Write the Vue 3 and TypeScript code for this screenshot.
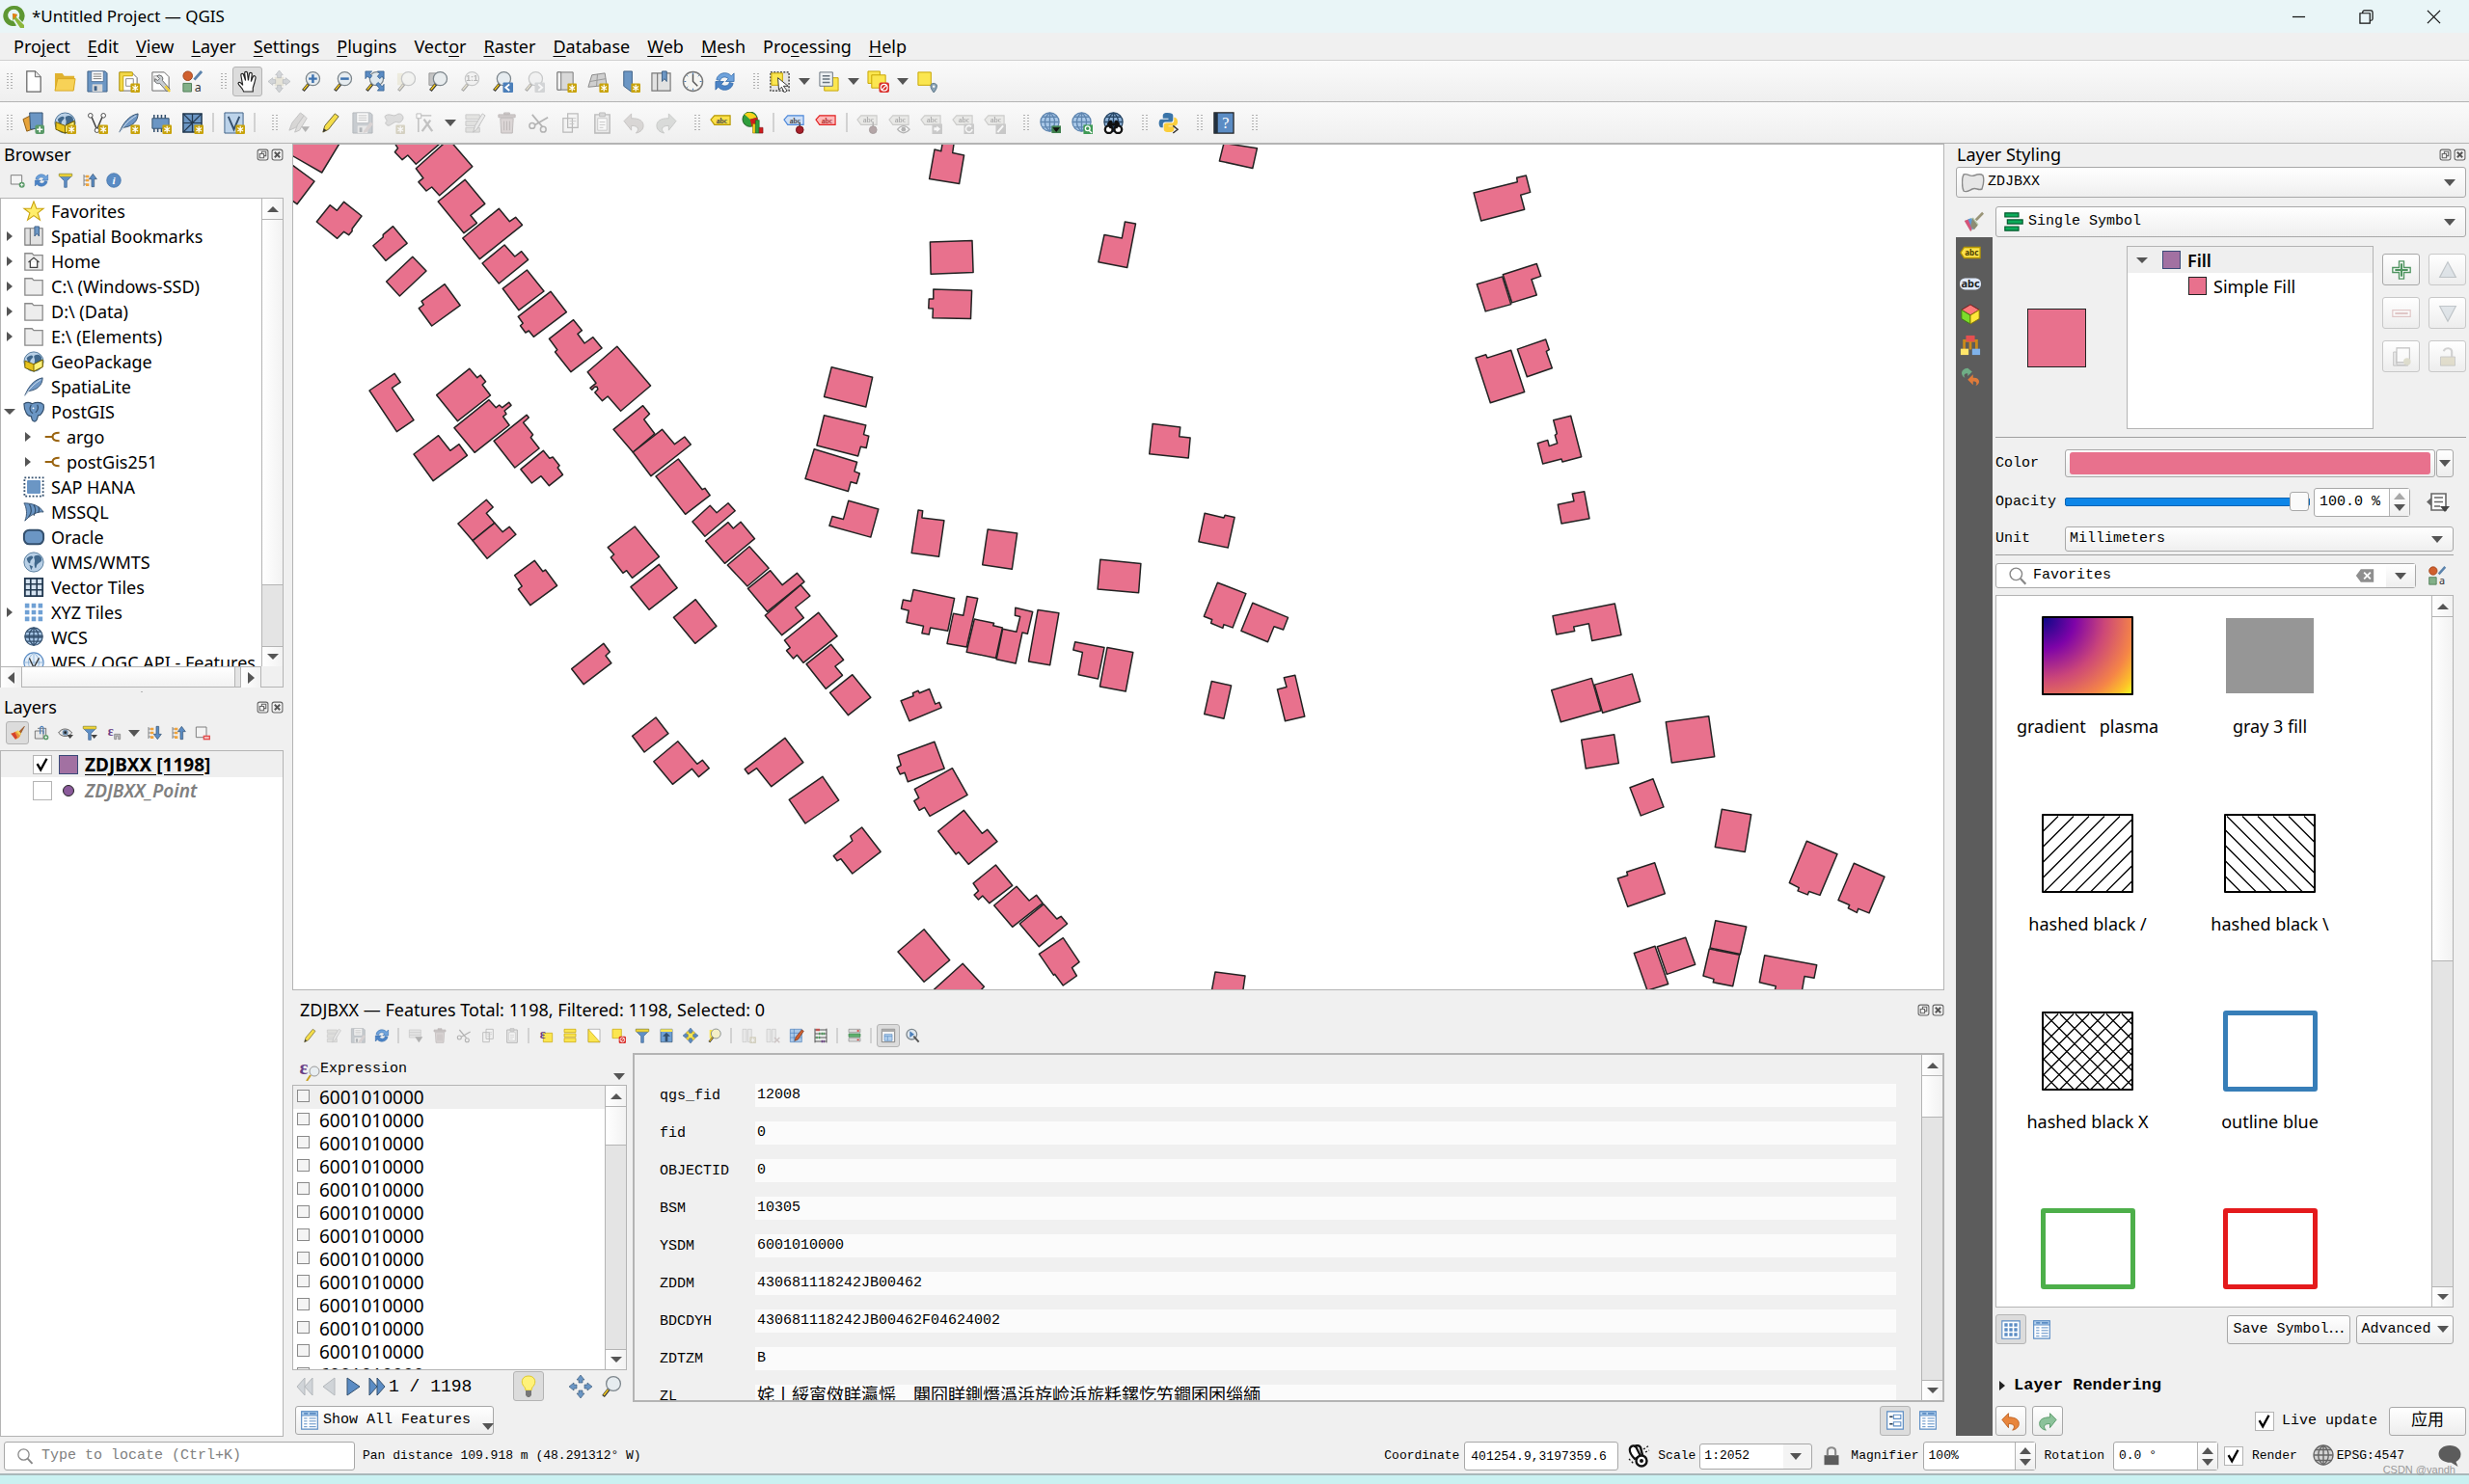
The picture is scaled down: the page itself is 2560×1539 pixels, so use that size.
<script setup lang="ts">
import { h } from 'vue'

/* ---------- icon drawings, all on a 24 x 24 grid ---------- */
const star =
  '<rect x="14" y="14" width="10" height="10" rx="1" fill="#c8a30b"/><path d="M19 15.4v7.2M16 17.2l6 3.6M22 17.2l-6 3.6" stroke="#fff" stroke-width="1.3"/>'
const plusBadge =
  '<rect x="14" y="14" width="10" height="10" rx="2" fill="#5a9a68"/><path d="M19 15.8v6.4M15.8 19h6.4" stroke="#fff" stroke-width="1.6"/>'
const lens = (fill = '#e6ecf0') =>
  `<path d="M9.5 14.5 3.5 22" stroke="#333" stroke-width="3.4"/><path d="M8.5 15.3 4 21" stroke="#f2c81e" stroke-width="1.6"/><circle cx="14" cy="9" r="7.4" fill="${fill}" stroke="#7d868c" stroke-width="1.3"/>`
const globe = (a: string, b: string) =>
  `<circle cx="12" cy="11" r="10" fill="${a}" stroke="${b}" stroke-width="1.3"/><path d="M2 11h20M12 1v20M4 5.5h16M4 16.5h16M12 1C5 6 5 16 12 21M12 1c7 5 7 15 0 20" fill="none" stroke="${b}" stroke-width="1.4"/>`
const tag = (fill: string, line: string, ink = '#4a4a4a') =>
  `<path d="M1 8.5 5 4h17v10H5Z" fill="${fill}" stroke="${line}" stroke-width="1.2"/><text x="13" y="12" text-anchor="middle" font-size="8" font-weight="700" fill="${ink}" font-family="Liberation Serif, serif">abc</text>`
const world =
  '<circle cx="12" cy="12" r="11" fill="#b9d0e6" stroke="#4c7396"/><path d="M4 8c3-3 6-4 7-2s-3 3-3 6-3 1-4-4ZM13 5c4-2 8 0 8 4s-5 3-6 8-3-2-2-5-2-5 0-7ZM7 15l4 2-2 4Z" fill="#41688c"/>'
const box = '<path d="M2 11 12 15 22 10v8l-10 5-10-4Z" fill="#e8c31c" stroke="#6d5a00"/><path d="M12 15v8l10-5v-8Z" fill="#fff27a" stroke="#6d5a00"/>'
const feather = '<path d="M2 22C6 12 12 4 22 2c0 8-6 14-16 15Z" fill="#6f97c4" stroke="#34506e"/><path d="M2 23C7 14 12 9 20 4" fill="none" stroke="#dbe7f3"/>'
const refresh =
  '<path d="M3 10C4 3 14 0 19 6l3-3v9h-9l3-3C12 6 8 7 7 11Z" fill="#6fa3dc" stroke="#2f67a8" stroke-width=".8"/><path d="M21 14c-1 7-11 10-16 4l-3 3v-9h9l-3 3c4 3 8 2 9-2Z" fill="#4b83c6" stroke="#2f67a8" stroke-width=".8"/>'
const pencil = '<path d="M4 22 6 15 17 2l4 3L10 19Z" fill="#f4dd4a" stroke="#6b6230"/><path d="M4 22l1-4 3 2Z" fill="#333"/>'
const funnel = '<path d="M2 2h20v3l-8 8v10h-4V13L2 5Z" fill="#5f8fc6" stroke="#3c6491"/><path d="M2 2h20v4H2Z" fill="#efd63c" stroke="#b59c14" stroke-width=".8"/>'
const layersTree = '<path d="M3 3v18M3 6h4M3 12h4M3 18h4" stroke="#777" fill="none" stroke-width="1.3"/><path d="M6 4h5v4H6ZM6 10h5v4H6ZM6 17h5v4H6Z" fill="#f0a33a"/>'
const undoArrow = (f: string, s: string) => `<path d="M1 10 9 2v5c9 0 13 3 13 8 0 4-3 7-8 8 3-3 4-8-5-8v5Z" fill="${f}" stroke="${s}"/>`
const redoArrow = (f: string, s: string) => `<path d="M23 10 15 2v5C6 7 2 10 2 15c0 4 3 7 8 8-3-3-4-8 5-8v5Z" fill="${f}" stroke="${s}"/>`
const fourWay = (c: string) =>
  `<path d="m12 0 4 5h-2v3h-4V5H8ZM12 24l4-5h-2v-3h-4v3H8ZM0 12l5-4v2h3v4H5v2ZM24 12l-5-4v2h-3v4h3v2Z" fill="${c}" stroke="#34506e" stroke-width=".6"/>`
const trash = '<path d="M5 7h14l-1 16H6Z" fill="#d8a0a0" stroke="#8c5a5a"/><path d="M3 3h18v3H3ZM9 1h6v2H9ZM9 10v10M12 10v10M15 10v10" fill="#b98080" stroke="#8c5a5a"/>'
const scissors = '<path d="M5 3l11 13M22 6 8 14" stroke="#555" stroke-width="1.8"/><circle cx="17" cy="19" r="3" fill="none" stroke="#555" stroke-width="1.6"/><circle cx="5" cy="15" r="3" fill="none" stroke="#555" stroke-width="1.6"/>'
const copy = '<path d="M4 7h10v15H4ZM9 2h11v15H9Z" fill="#f4f4f4" stroke="#666" stroke-width="1.3"/><path d="M11 7h7M11 10h7M11 13h5" stroke="#888"/>'
const paste = '<path d="M4 3h16v20H4Z" fill="#ddd" stroke="#666" stroke-width="1.5"/><path d="M7 7h10v13H7Z" fill="#fff" stroke="#888"/><path d="M9 1h6v4H9Z" fill="#aaa" stroke="#666"/><path d="M9 11h6M9 14h6M9 17h4" stroke="#888"/>'
const save =
  '<path d="M2 1h19l2 2v20H2Z" fill="#6b96c4" stroke="#3d5f85"/><path d="M6 1h13v11H6Z" fill="#fff" stroke="#3d5f85" stroke-width=".7"/><path d="M8 4h9M8 6.5h9M8 9h9" stroke="#777"/><path d="M7 15h11v8H7Z" fill="#d8d8d8"/><path d="M9 17h3v5H9Z" fill="#3d5f85"/>'
const tableIco =
  '<path d="M2 1h20v22H2Z" fill="#fff" stroke="#5b8cc4" stroke-width="1.4"/><path d="M2 1h20v5H2Z" fill="#b5d2ee" stroke="#5b8cc4" stroke-width="1.2"/><path d="M5 3.5h5M12 3.5h8" stroke="#5b8cc4" stroke-width="2.2"/><path d="M5 9.5h4M11.5 9.5H20M5 13h4M11.5 13H20M5 16.5h4M11.5 16.5H20M5 20h4M11.5 20H20" stroke="#5b8cc4" stroke-width="1.2"/>'
const nodes = '<path d="M6 5 12 19 18 5" fill="none" stroke="#444" stroke-width="1.6"/><circle cx="5" cy="4" r="2.4" fill="#fff" stroke="#444"/><circle cx="12" cy="20" r="2.4" fill="#fff" stroke="#444"/><circle cx="19" cy="4" r="2.4" fill="#fff" stroke="#444"/>'
const noEntry = '<rect x="13" y="13" width="11" height="11" rx="2" fill="#d9302c"/><circle cx="18.5" cy="18.5" r="3.5" fill="none" stroke="#fff" stroke-width="1.3"/><path d="m16 21 5-5" stroke="#fff" stroke-width="1.3"/>'
const eps = '<text x="7" y="17" text-anchor="middle" font-size="21" font-weight="700" fill="#6a3f86" font-family="Liberation Serif, serif">ε</text>'
const hand =
  '<path d="M8 23c-1-4-5-6-6-9 1-2 3-1 5 2L5 5c0-2 3-2 3 0l2 6-1-8c0-2 3-2 3 0l1 8 1-7c0-2 3-2 3 0l-1 8 2-5c1-2 3-1 3 1-1 5-2 8-3 11v4Z" fill="#fff" stroke="#222" stroke-width="1.2"/>'
const drop = '<path d="M18 11v5" stroke="#555" stroke-width="1.5"/><circle cx="18" cy="19.5" r="4" fill="#a8202a" stroke="#701018"/>'
const styleMgr =
  '<circle cx="7" cy="6" r="5" fill="#d0602e" stroke="#a0451c"/><path d="M22 1 14 10" stroke="#5b83ac" stroke-width="3"/><path d="M2 14h9v9H2Z" fill="#82b088" stroke="#4d7c55"/><text x="18" y="23" text-anchor="middle" font-size="13" fill="#333" font-family="Noto Sans, sans-serif">a</text>'
const bin = '<circle cx="7" cy="19" r="4" fill="#fff" stroke="#111" stroke-width="2.5"/><circle cx="17" cy="19" r="4" fill="#fff" stroke="#111" stroke-width="2.5"/><path d="M5 13 8 9h2l1 3h2l1-3h2l3 4-3 5h-3v-3h-2v3H8Z" fill="#111"/>'

const icons: Record<string, string> = {
  logo: '<path d="M12 1a10.5 10.5 0 1 0 3 20.500l-3-4.800a6 6 0 1 1 5.400-3l3.800 4.300A10.500 10.500 0 0 0 12 1Z" fill="#5d9732"/><path d="m11 9 5 1-1 3 8 8v3h-4l-6-9-2 1Z" fill="#8cb63c"/><path d="m11 9 5 1-4 5Z" fill="#ee7913"/>',
  page: '<path d="M5 1h9l6 6v16H5Z" fill="#fff" stroke="#666" stroke-width="1.3"/><path d="M14 1v6h6" fill="#e6e6e6" stroke="#666"/>',
  open: '<path d="M1 3h8l2 3h11v15H1Z" fill="#e0b230"/><path d="M4 9h19l-2 13H1Z" fill="#f7d257" stroke="#d8a821"/>',
  save,
  layout: `<path d="M2 2h13l6 6v14H2Z" fill="#fff" stroke="#666"/><path d="M2 2h14v4H6v16H2Z" fill="#f3d94a" stroke="#c7a400"/><path d="M9 9h8v8H9Z" fill="none" stroke="#888"/>${star}`,
  layoutMgr: '<path d="M3 2h13l5 5v15H3Z" fill="#fff" stroke="#666"/><path d="M5 6h8v6H5Z" fill="#eee" stroke="#aaa"/><path d="M8 6a4 4 0 0 1 6 5l8 9-3 3-8-9c-3 1-6-1-5-5l3 2 2-2Z" fill="#c9ced2" stroke="#666"/><path d="m17 17 5 6" stroke="#f0cf3a" stroke-width="2.5"/>',
  styleMgr,
  hand,
  panSel: `<path d="M7 7h10v10H7Z" fill="#e6d05a"/>${fourWay('#8ea9c6')}`,
  zoomIn: `${lens()}<path d="M14 4.5v9M9.5 9h9" stroke="#3f73b0" stroke-width="2.6"/>`,
  zoomOut: `${lens()}<path d="M9.5 9h9" stroke="#3f73b0" stroke-width="2.6"/>`,
  zoomFull: `${lens('#dfe8ee')}<path d="M2 1h7L6.500 3.500 9 6 7 8.500 4 6.500 2 9ZM22 1v8l-2-2.500L17.500 9 15 6.500l2.500-3L15 1ZM22 22h-7l2-2.500L13.500 15l2.500-2 4 4.500 2-2.500Z" fill="#5b8cc4" stroke="#2f5b8c" stroke-width=".8"/>`,
  zoomSel: `<path d="M2 3h11v13H2Z" fill="#f6df5b"/>${lens('#eef0dc')}`,
  zoomLayer: `<path d="M2 3h11v13H2Z" fill="#c4c4c4" stroke="#999"/>${lens('#e8ecee')}`,
  zoomNative: `${lens('#eee')}<text x="14" y="12" text-anchor="middle" font-size="9" font-weight="700" fill="#555" font-family="Liberation Sans, sans-serif">1:1</text>`,
  zoomLast: `${lens()}<rect x="13" y="13" width="11" height="11" rx="1" fill="#4b7fba"/><path d="m20 15-4 3.500 4 3.500" fill="none" stroke="#fff" stroke-width="2"/>`,
  zoomNext: `${lens()}<rect x="13" y="13" width="11" height="11" rx="1" fill="#9ab"/><path d="m17 15 4 3.500-4 3.500" fill="none" stroke="#fff" stroke-width="2"/>`,
  newMap: `<path d="M3 2h17v19H3Z" fill="#d9d9d9" stroke="#777"/><path d="M3 2h4v19H3Z" fill="#f4f4f4" stroke="#777"/>${star}`,
  new3d: `<path d="M6 5 20 3l2 13-20 2Z" fill="#cfcfcf" stroke="#888"/><path d="m4 12 17-3M12 4l-1 13" stroke="#999"/>${star}`,
  newMark: `<path d="M6 1h9v14l2 4-3 4-8-6Z" fill="#6b96c4" stroke="#3d5f85"/>${star}`,
  marks: '<path d="M2 3h6v19H2ZM8 3h14v19H4" fill="#e2e2e2" stroke="#777" stroke-width="1.2"/><path d="M13 1h5v11l-2.500-3-2.500 3Z" fill="#6b96c4" stroke="#3d5f85"/>',
  clock: '<circle cx="12" cy="12" r="10.5" fill="#f5f5f2" stroke="#777" stroke-width="1.5"/><path d="M12 4v8l5 5" fill="none" stroke="#555" stroke-width="1.5"/><path d="M12 2.500v2M12 19.500v2M2.500 12h2M19.500 12h2M5.500 5.500l1 1M18.500 5.500l-1 1M5.500 18.500l1-1" stroke="#3f73b0"/>',
  refresh,
  select: '<path d="M2 2h20v20H2Z" fill="#e6e6e6" stroke="#222" stroke-width="1.3" stroke-dasharray="2 1.5"/><path d="M3 3h12v13H3Z" fill="#fbe650" stroke="#c7a400"/><path d="m10 8 1 13 3-3 3 6 3-2-4-5h5Z" fill="#fff" stroke="#333"/>',
  selForm: '<path d="M7 8h15v14H7Z" fill="#fbe650" stroke="#c7a400"/><path d="M2 2h14v15H2Z" fill="#eef1f3" stroke="#66727c"/><path d="M5 6h8M5 9.500h8M5 13h8" stroke="#66727c" stroke-width="1.6"/>',
  deselect: `<path d="M1 1h13v13H1Z" fill="#fbe650" stroke="#c7a400"/><path d="M5 5h15v14H5Z" fill="#fbe650" stroke="#c7a400"/>${noEntry}`,
  selLoc: '<path d="M2 2h14v14H2Z" fill="#fbe650" stroke="#c7a400"/><path d="M19 24c-5-6-4-10 0-10s5 4 0 10Z" fill="#8aa2b4" stroke="#5c7688"/><circle cx="19" cy="17.5" r="1.2" fill="#fff"/>',
  dataSrc: `<path d="m1 8 10-5 5 14-11 4Z" fill="#e7a33a" stroke="#8a5a12"/><path d="M8 1h14v16l-13 2Z" fill="#6b96c4" stroke="#34506e"/>${plusBadge}`,
  newGpkg: `${world}${box}${star}`,
  newShp: `${nodes}${star}`,
  newLite: `${feather}${star}`,
  newMem: `<path d="M3 7h18v11H3Z" fill="#6b96c4" stroke="#34506e"/><path d="M5 3v4M9 3v4M13 3v4M17 3v4M5 18v4M9 18v4M13 18v4" stroke="#34506e" stroke-width="1.6"/>${star}`,
  newMesh: `<path d="M2 2h20v20H2Z" fill="#6b96c4" stroke="#22384f" stroke-width="1.5"/><path d="M2 12h20M12 2v20M2 2l10 10L22 2M2 22l10-10" stroke="#22384f" stroke-width="1.3" fill="none"/>${star}`,
  newVirt: `<path d="M2 1h20v22H2Z" fill="#bcd3ea" stroke="#3d5f85"/><path d="M6 5 12 19 18 5" fill="none" stroke="#34506e" stroke-width="2"/>${star}`,
  edits: '<path d="M2 20 5 12 14 1l4 3-9 13Z" fill="#b5aaa2" stroke="#777"/><path d="M8 22 11 14 18 4l3 3-8 13Z" fill="#c9bdb4" stroke="#777"/><path d="M15 16h9l-4.500 6Z" fill="#555"/>',
  pencil,
  saveEdits: `${save}<path d="m14 20 7-9 3 2-7 9-4 1Z" fill="#d79a9a"/>`,
  addPoly: `<path d="M3 4c5-3 8 2 12-1s9 2 6 6-4 2-7 2-7 6-10 3 1-3 0-5-3-4-1-5Z" fill="#b9b9b9" stroke="#777"/>${star}`,
  vertex: '<path d="M4 22V4h14" fill="none" stroke="#666" stroke-width="1.4"/><path d="M2 2h5v5H2Z" fill="#fff" stroke="#666"/><path d="m8 21 9-12M10 8l9 13" stroke="#777" stroke-width="2.4"/>',
  modify: '<path d="M2 3h15v5H2ZM2 10h15v5H2ZM2 17h15v5H2Z" fill="#c9c7b8" stroke="#888"/><path d="M10 22 12 15 20 2l3 2-9 15Z" fill="#ddd" stroke="#777"/>',
  trash,
  scissors,
  copy,
  paste,
  undoDim: undoArrow('#c0a89c', '#8f7b70'),
  redoDim: redoArrow('#a9b8a9', '#7c8a7c'),
  label: tag('#fbe14a', '#b59600'),
  diagram: '<circle cx="9" cy="8" r="8" fill="#2f9e3c" stroke="#1c5c22"/><path d="M9 8 3 2.500C8-1.500 15 2 16 6Z" fill="#f7d21b"/><path d="M9 8 17 6c1 4-2 9-6 10Z" fill="#d01c1c"/><path d="M12 13h3v10h-3Z" fill="#f7d21b" stroke="#8a7200" stroke-width=".6"/><path d="M15 9h4v14h-4Z" fill="#2f9e3c" stroke="#1c5c22" stroke-width=".6"/><path d="M19 17h4v6h-4Z" fill="#d01c1c" stroke="#701018" stroke-width=".6"/>',
  labelPin: `${tag('#cfe0f7', '#4b86d8')}${drop}`,
  labelRed: tag('#ffb9b9', '#e02020', '#b03030'),
  lblA: `${tag('#d9d9c4', '#8f8f80')}${drop}`,
  lblB: `${tag('#d9d9c4', '#8f8f80')}<path d="M10 19c4-5 9-5 13 0-4 5-9 5-13 0Z" fill="#fff" stroke="#555" stroke-width="1.3"/><circle cx="16.5" cy="19" r="2.5" fill="#555"/>`,
  lblC: `${tag('#d9d9c4', '#8f8f80')}<path d="M13 13h11v11H13Z" fill="#8c8c8c"/><path d="M15 17h3v-2l4 3.500-4 3.500v-2h-3Z" fill="#fff"/>`,
  lblD: `${tag('#d9d9c4', '#8f8f80')}<path d="M13 13h11v11H13Z" fill="#8c8c8c"/><path d="M21 16a3.500 3.500 0 1 0 1 3" fill="none" stroke="#fff" stroke-width="1.6"/>`,
  lblE: `${tag('#d9d9c4', '#8f8f80')}<path d="M13 13h11v11H13Z" fill="#8c8c8c"/><path d="m15 22 6-7" stroke="#fff" stroke-width="2"/>`,
  metaGet: `${globe('#a9c8e8', '#5f86b0')}<path d="M14 15h10v8H14Z" fill="#3f7f4c"/><path d="M15 17h8l-4 5Z" fill="#111"/>`,
  metaFind: `${globe('#a9c8e8', '#5f86b0')}<path d="M14 14h10v10H14Z" fill="#3f9a55"/><circle cx="18.5" cy="18" r="2.5" fill="none" stroke="#fff" stroke-width="1.4"/><path d="m20 20 3 3" stroke="#fff" stroke-width="1.4"/>`,
  metaBin: `${globe('#8fb3d9', '#274766')}${bin}`,
  python: '<path d="M11 1c-5 0-5 2-5 4v2h6v1H4c-3 0-3 8 0 9h2v-3c0-2 1-3 3-3h5c2 0 3-1 3-3V4c0-2-2-3-6-3Z" fill="#3a74a8"/><path d="M13 22c5 0 5-2 5-4v-2h-6v-1h7c4 0 4-8 0-9h-1v3c0 2-1 3-3 3h-5c-2 0-3 1-3 3v4c0 2 2 3 6 3Z" fill="#fbce3b"/><path d="m17 15 5 4-5 4" fill="none" stroke="#333" stroke-width="1.5"/>',
  help: '<path d="M2 1h21v22H2Z" fill="#5b8cc4" stroke="#222" stroke-width="1.3"/><path d="M2 1h4v22H2Z" fill="#22303e"/><text x="14.5" y="18" text-anchor="middle" font-size="17" fill="#fff" font-family="Liberation Serif, serif">?</text>',
  /* browser and layer panels */
  addLayer: '<path d="M2 4h17v14H2Z" fill="#f4f4f4" stroke="#777" stroke-width="1.4"/><circle cx="19" cy="19" r="4.5" fill="#5a9a68"/><path d="M19 16.500v5M16.500 19h5" stroke="#fff" stroke-width="1.4"/>',
  remLayer: '<path d="M2 3h16v16H2Z" fill="#f4f4f4" stroke="#777" stroke-width="1.4"/><path d="M13 16h11v7H13Z" fill="#e45050"/><path d="M15 19.500h7" stroke="#fff" stroke-width="1.8"/>',
  funnel,
  collapse: `${layersTree}<path d="m17 2 6 8h-4v12h-4V10h-4Z" fill="#5b8cc4" stroke="#34506e"/>`,
  expand: `${layersTree}<path d="m17 22 6-8h-4V2h-4v12h-4Z" fill="#5b8cc4" stroke="#34506e"/>`,
  info: '<circle cx="12" cy="12" r="11" fill="#5b8cc4" stroke="#3d6ea6"/><text x="12" y="18" text-anchor="middle" font-size="17" font-style="italic" font-weight="700" fill="#fff" font-family="Liberation Serif, serif">i</text>',
  brush: '<path d="M23 2 13 12l3 3Z" fill="#b5652a" stroke="#8a4718"/><path d="M2 13c5 0 6-4 10-3l5 4c0 5-4 7-8 8Z" fill="#e9963a"/><path d="M2 13c3 0 4-1 6-2l4 8-3 3Z" fill="#d6422e"/><path d="M10 10l3-2 5 5-2 3Z" fill="#f4d35a"/>',
  groupAdd: '<path d="M2 9h13v12H2ZM6 5h13v12" fill="#e6e6e6" stroke="#666" stroke-width="1.3"/><path d="M10 14V5c0-4 5-4 5 0v9" fill="none" stroke="#4b7fba" stroke-width="1.8"/><circle cx="19" cy="19" r="4" fill="#5a9a68"/><path d="M19 17v4M17 19h4" stroke="#fff" stroke-width="1.3"/>',
  eye: '<path d="M1 12C6 4 16 4 22 12 16 19 7 19 1 12Z" fill="#e8e8e8" stroke="#555" stroke-width="1.4"/><circle cx="11.5" cy="11.5" r="4.5" fill="#6d8cab"/><circle cx="11.5" cy="11.5" r="2" fill="#222"/><path d="M14 15h10l-5 6Z" fill="#444"/>',
  funnelMenu: `${funnel}<path d="M14 15h10l-5 6Z" fill="#444"/>`,
  epsFilter: `${eps}<path d="M13 14h9v8h-3v-5h-3v5h-3Z" fill="#bbb" stroke="#777"/>`,
  star: '<path d="m12 1 3 8h8l-6.500 5L19 22l-7-5-7 5 2.500-8L1 9h8Z" fill="#ffee6a" stroke="#c9a20c" stroke-width="1.2"/>',
  home: '<path d="M2 3h8l2 2h10v17H2Z" fill="#ededed" stroke="#8a8a8a" stroke-width="1.4"/><path d="m6 13 6-5 6 5M8 12v7h8v-7" fill="#fff" stroke="#444" stroke-width="1.4"/>',
  folder: '<path d="M2 3h8l2 2h10v17H2Z" fill="#ededed" stroke="#8a8a8a" stroke-width="1.4"/>',
  gpkg: `${world}${box}`,
  feather,
  elephant: '<path d="M1 3c5-3 7-1 9 0 5-2 10-2 13 1 1 4-1 9-4 12h-2c-1 3-1 7-4 7-4 0-3-4-4-6-4 1-8-6-8-14Z" fill="#6b96c4" stroke="#34506e" stroke-width="1.3"/><path d="M9 4c-2 4-1 8 2 10M16 4c2 4 0 7-2 9" fill="none" stroke="#34506e" stroke-width="1.3"/><circle cx="11.5" cy="8" r="1" fill="#fff"/>',
  plug: '<path d="M1 12h11M22 6c-7 0-10 3-10 6s3 6 10 6" fill="none" stroke="#9a6410" stroke-width="3"/>',
  hana: '<path d="M5 5h14v14H5Z" fill="#6b96c4" stroke="#5b8cc4"/><path d="M1.500 1.500h21v21h-21Z" fill="none" stroke="#34506e" stroke-width="2" stroke-dasharray="2 2"/>',
  mssql: '<path d="M1 2c8 0 17 2 22 10-6-1-15 3-21 10C5 15 4 7 1 2Z" fill="#6b96c4" stroke="#34506e"/><path d="M7 3c3 5 3 10-1 15M12 4c3 5 2 8 0 12M17 6c2 3 1 5 0 7" fill="none" stroke="#34506e" stroke-width="1.3"/>',
  oracle: '<rect x="1" y="4" width="22" height="16" rx="6" fill="#6b96c4" stroke="#34506e" stroke-width="2.2"/>',
  wms: world,
  vtiles: '<path d="M2 2h20v20H2Z" fill="#d5e3f1" stroke="#22384f" stroke-width="2"/><path d="M2 8.500h20M2 15h20M8.500 2v20M15.500 2v20" stroke="#22384f" stroke-width="1.8"/>',
  xyz: '<path d="M2 2h5v5H2ZM9.500 2h5v5h-5ZM17 2h5v5h-5ZM2 9.500h5v5H2ZM9.500 9.500h5v5h-5ZM17 9.500h5v5h-5ZM2 17h5v5H2ZM9.500 17h5v5h-5ZM17 17h5v5h-5Z" fill="#6fa0d4"/>',
  wcs: `${globe('#a9c8e8', '#34506e')}<path d="M2 9h20v4H2Z" fill="#34506e" opacity=".7"/>`,
  wfs: '<circle cx="12" cy="12" r="11" fill="#e4eef8" stroke="#5b8cc4" stroke-width="1.3"/><path d="M1 12h22M12 1v22M12 1C4 7 4 17 12 23M12 1c8 6 8 16 0 22" fill="none" stroke="#8fb3d9"/><path d="m7 7 5 11 6-11" fill="none" stroke="#333" stroke-width="1.4"/>',
  /* attribute form */
  addRow: '<path d="M2 3h18v12H2Z" fill="#d6d6d6" stroke="#888"/><path d="M2 7h18M2 11h18" stroke="#888"/><path d="M11 14h12l-6 9Z" fill="#555"/>',
  selExpr: `<path d="M8 8h14v14H8Z" fill="#fbe650" stroke="#c7a400"/>${eps}`,
  selAll: '<path d="M3 2h18v5H3ZM3 9h18v5H3ZM3 16h18v6H3Z" fill="#fbe650" stroke="#c7a400"/>',
  invert: '<path d="M3 2h18v20H3Z" fill="#fff" stroke="#999"/><path d="M3 2v20h18Z" fill="#fbe650" stroke="#c7a400"/>',
  selNone: `<path d="M3 2h14v14H3Z" fill="#fbe650" stroke="#c7a400"/>${noEntry}`,
  moveTop: '<path d="M3 2h18v20H3Z" fill="#6fa0d4" stroke="#34506e"/><path d="M3 2h18v4H3Z" fill="#fbe650"/><path d="m12 7 6 6h-4v8h-4v-8H6Z" fill="#34506e"/>',
  panTo: `<path d="M6 6h12v12H6Z" fill="#fbe650" stroke="#c7a400"/>${fourWay('#5b8cc4')}`,
  zoomTo: `<path d="M4 3h11v13H4Z" fill="#fbe650"/>${lens('#f4efc8')}`,
  colAdd: `<path d="M3 2h6v20H3ZM11 2h6v20h-6Z" fill="#ddd" stroke="#888"/>${star}`,
  colDel: '<path d="M3 2h6v20H3ZM11 2h6v20h-6Z" fill="#ddd" stroke="#888"/><path d="m15 15 8 8M23 15l-8 8" stroke="#c77" stroke-width="2"/>',
  colEdit: '<path d="M2 2h18v20H2Z" fill="#a9c8e8" stroke="#4b7fba"/><path d="M8 2v20M2 8h18M2 15h18" stroke="#4b7fba"/><path d="M9 20 11 14 20 3l3 2-9 13Z" fill="#d0602e" stroke="#702c10"/>',
  abacus: '<path d="M3 1v22M21 1v22M3 3h18M3 9h18M3 15h18M3 21h18" stroke="#555" stroke-width="1.5"/><path d="M6 1v4M9 1v4" stroke="#d0302c" stroke-width="2"/><path d="M10 7v4M14 7v4M17 7v4" stroke="#4a9a58" stroke-width="2"/><path d="M6 13v4M10 13v4" stroke="#4a9a58" stroke-width="2"/><path d="M14 19v4M17 19v4" stroke="#6a3f86" stroke-width="2"/>',
  condFmt: '<path d="M3 2h18v5H3Z" fill="#ddd" stroke="#888"/><path d="M3 9h18v5H3Z" fill="#5fb06e" stroke="#3f7f4c"/><path d="M3 16h18v5H3Z" fill="#ddd" stroke="#888"/><path d="M16 4.500h3M16 18.500h3" stroke="#d0302c" stroke-width="2"/>',
  dock: '<path d="M2 2h20v20H2Z" fill="#f4f4f4" stroke="#777" stroke-width="1.3"/><path d="M2 2h20v4H2Z" fill="#aaa"/><path d="M6 10h12v10H6Z" fill="#b5d2ee" stroke="#5b8cc4"/><path d="M6 13h12M11 13v7" stroke="#5b8cc4"/>',
  actions: '<circle cx="11" cy="10" r="8" fill="#dfe8f0" stroke="#7d868c" stroke-width="2"/><path d="m8 5 7 5-7 5Z" fill="#4b7fba"/><path d="m14 13 8 9" stroke="#555" stroke-width="3"/>',
  exprFind: `${eps}<circle cx="18" cy="14" r="5" fill="#e9eef1" stroke="#999"/><path d="m14 18-4 6" stroke="#c8a020" stroke-width="2"/>`,
  bulb: '<path d="M12 1C6 1 4 6 6 10c1 2 3 3 3 6h6c0-3 2-4 3-6 2-4 0-9-6-9Z" fill="#fff27a" stroke="#e0c92a"/><path d="M9 16h6v5l-2 2h-2l-2-2Z" fill="#777"/>',
  fourWay: fourWay('#6b96c4'),
  lens: lens(),
  table: tableIco,
  formView: '<path d="M2 1h20v22H2Z" fill="#fff" stroke="#5b8cc4" stroke-width="1.4"/><path d="M10 5h9v5h-9ZM10 14h9v5h-9Z" fill="#fff" stroke="#5b8cc4" stroke-width="1.3"/><path d="M5 7.500h4M5 16.500h4" stroke="#22384f" stroke-width="2"/>',
  /* styling dock */
  polygon: '<path d="M2 4c4-2 6 3 11 1s8-1 9 0c2 5 0 11-1 14-4 2-6-2-10 0s-6 4-9 2C0 16 0 8 2 4Z" fill="#e6e6e6" stroke="#8a8a8a" stroke-width="1.4"/>',
  brushTab: '<path d="M2 11 12 7l6 8-9 8Z" fill="#b9ccb0"/><path d="m2 11 5-2 4 10-2 4Z" fill="#d6547a"/><path d="m6 9 4-1 4 10-3 3Z" fill="#5b9bd5"/><path d="M23 2 15 10" stroke="#9a9578" stroke-width="3"/><path d="m11 8 6 8-4 5-4-4Z" fill="#8c8c74"/>',
  tagTab: '<path d="M1 12 5 6h18v12H5Z" fill="#fbe14a" stroke="#b59600" stroke-width="1.4"/><text x="13.5" y="15" text-anchor="middle" font-size="9" font-weight="700" fill="#4a3d00" font-family="Noto Sans, sans-serif">abc</text>',
  maskTab: '<rect x="0" y="6" width="24" height="13" rx="6" fill="#dfe9fb"/><text x="12" y="16" text-anchor="middle" font-size="12" font-weight="700" fill="#222" font-family="Noto Sans, sans-serif">abc</text>',
  cube: '<path d="m12 1 10 6-10 6L2 7Z" fill="#ff7a7a" stroke="#7a1515"/><path d="M2 7l10 6v10L2 17Z" fill="#7ddc2a" stroke="#3c7a10"/><path d="m22 7-10 6v10l10-6Z" fill="#ffe83a" stroke="#8a7a00"/>',
  diaTab: '<path d="M5 18V7h14v11M12 7v10" fill="none" stroke="#c98a1a" stroke-width="3"/><path d="M7 1h10v7H7Z" fill="#e45050"/><path d="M1 16h9v7H1Z" fill="#ffe56a"/><path d="M14 16h9v7h-9Z" fill="#7fb2ea"/>',
  history: '<path d="M9 0v3l5 4-5 5V9C5 9 4 11 6 14 1 12 0 4 9 3Z" fill="#6fae86"/><path d="M15 10v4c8-1 9 7 3 9 2-3 1-5-3-5v4l-6-6Z" fill="#e07b3a"/>',
  single: '<path d="M1 1h17v5H1ZM4 9.500h19v5H4ZM1 18h17v5H1Z" fill="#0cab5a" stroke="#06592e" stroke-width="1.4"/>',
  plus: '<path d="M9 1h6v8h8v6h-8v8H9v-8H1V9h8Z" fill="#fff" stroke="#4f9460" stroke-width="1.6"/><path d="M12 4v16M4 12h16" stroke="#4f9460" stroke-width="2.6"/>',
  minus: '<path d="M1 8h22v8H1Z" fill="#fff" stroke="#c99" stroke-width="1.4"/><path d="M4 12h16" stroke="#c99" stroke-width="2.6"/>',
  dup: '<path d="M2 6h4v16h14v1H2Z" fill="#ddd" stroke="#888"/><path d="M6 1h16v18H6Z" fill="#fff" stroke="#888" stroke-width="1.3"/><circle cx="19" cy="18" r="4.5" fill="#c9c7a8"/>',
  unlock: '<path d="M3 12h18v11H3Z" fill="#cfc7a6" stroke="#999"/><path d="M7 5c1-5 11-5 10 2v5" fill="none" stroke="#aaa" stroke-width="2.6"/>',
  triUp: '<path d="M12 2 22 21H2Z" fill="#c9d3db" stroke="#8a949b" stroke-width="1.4"/>',
  triDown: '<path d="M12 22 22 3H2Z" fill="#c9d3db" stroke="#8a949b" stroke-width="1.4"/>',
  override: '<path d="M5 3h15v17H5Z" fill="#fff" stroke="#666" stroke-width="1.6"/><path d="M8 7h9M8 11.500h9M8 16h6" stroke="#666" stroke-width="1.6"/><path d="M5 7 0 11.500 5 16Z" fill="#666"/><path d="M14 16h10l-5 6Z" fill="#444"/>',
  search: '<circle cx="10" cy="10" r="7.5" fill="none" stroke="#888" stroke-width="1.7"/><path d="m15.500 15.500 6.500 7" stroke="#888" stroke-width="2.6"/>',
  clear: '<path d="M1 12 7 4h16v16H7Z" fill="#8f8f8f"/><path d="m11 8 8 8M19 8l-8 8" stroke="#fff" stroke-width="2.2"/>',
  gridView: '<path d="M1 1h22v22H1Z" fill="#fff" stroke="#5b8cc4" stroke-width="1.3"/><path d="M4 4h4v4H4ZM10 4h4v4h-4ZM16 4h4v4h-4ZM4 10h4v4H4ZM10 10h4v4h-4ZM16 10h4v4h-4ZM4 16h4v4H4ZM10 16h4v4h-4ZM16 16h4v4h-4Z" fill="#5b8cc4"/>',
  undo: undoArrow('#e8853c', '#b85c1c'),
  redo: redoArrow('#8cc29a', '#4f9460'),
  /* status bar */
  extents: '<path d="M3 4c2-4 6-3 7 0l4 8-6 3C5 12 2 8 3 4Z" fill="#fff" stroke="#111" stroke-width="2.2"/><path d="M8 3c1-3 5-2 6 0l2 8" fill="none" stroke="#111" stroke-width="2.4"/><circle cx="15" cy="17" r="5.5" fill="#fff" stroke="#111" stroke-width="2.4"/><circle cx="15" cy="17" r="2" fill="#111"/><path d="m17 5 6-4M2 15l5 5M19 8l4-2" stroke="#111" stroke-width="1.3" stroke-dasharray="2 2"/>',
  lock: '<path d="M3 11h18v12H3Z" fill="#5c5c5c"/><path d="M7 11V6c0-6 10-6 10 0v5" fill="none" stroke="#8a8a8a" stroke-width="2.6"/>',
  crs: globe('#d4d4d4', '#666'),
  bubble: '<path d="M12 1c7 0 11.500 4 11.500 9 0 4-2 6-5 8l2 5-7-4.200C6 19 .5 15 .5 10S5 1 12 1Z" fill="#5c5c5c"/>',
  float: '<rect x="2" y="2" width="20" height="20" rx="4" fill="none" stroke="#666" stroke-width="2"/><path d="M6 10h8v8H6ZM10 10V6h8v8h-4" fill="none" stroke="#666" stroke-width="2"/>',
  close: '<rect x="2" y="2" width="20" height="20" rx="4" fill="none" stroke="#666" stroke-width="2"/><path d="m7 7 10 10M17 7 7 17" stroke="#555" stroke-width="3.6"/>',
}

const Icon = (p: { name: string }) =>
  h('svg', { viewBox: '0 0 24 24', fill: 'none', 'aria-hidden': 'true', innerHTML: icons[p.name] })
Icon.props = ['name']

/* Scrollbar: the three numbers are shares of the groove */
const ScrollBar = (p: { dir: string; before: number; size: number; after: number }) =>
  h('div', { class: ['bar', p.dir] }, [
    h('button', { class: 'end back', 'aria-label': 'Scroll back' }),
    h('div', { class: 'groove', style: { flexGrow: p.before } }),
    h('div', { class: 'grip', style: { flexGrow: p.size } }),
    h('div', { class: 'groove', style: { flexGrow: p.after } }),
    h('button', { class: 'end fwd', 'aria-label': 'Scroll forward' }),
  ])
ScrollBar.props = ['dir', 'before', 'size', 'after']

/* Toolbar shorthand: "|" handle, "-" separator, "v" menu arrow, "!" disabled, "*" pressed */
const ToolBar = (p: { items: string; small?: boolean }) =>
  h(
    'div',
    { class: ['tools', p.small ? 'small' : 'large'], role: 'toolbar' },
    p.items.split(' ').map((t) => {
      if (t === '|') return h('span', { class: 'handle' })
      if (t === '-') return h('span', { class: 'sep' })
      if (t === 'v') return h('button', { class: 'drop', 'aria-label': 'Menu' })
      const name = t.replace(/[!*]/, '')
      return h('button', { class: ['tool', { dim: t[0] === '!', on: t[0] === '*' }], 'aria-label': name }, [h(Icon, { name })])
    }),
  )
ToolBar.props = { items: String, small: Boolean }

const mainTools =
  '| page open save layout layoutMgr styleMgr | *hand !panSel zoomIn zoomOut zoomFull !zoomSel zoomLayer !zoomNative zoomLast !zoomNext newMap new3d newMark marks clock refresh | select v selForm v deselect v selLoc'
const editTools =
  '| dataSrc newGpkg newShp newLite newMem newMesh - newVirt - | !edits pencil !saveEdits !addPoly !vertex v !modify !trash !scissors !copy !paste !undoDim !redoDim | label diagram - labelPin labelRed - !lblA !lblB !lblC !lblD !lblE | metaGet metaFind metaBin | python | help |'
const attrTools =
  'pencil !modify !saveEdits refresh - !addRow !trash !scissors !copy !paste - selExpr selAll invert selNone funnel moveTop panTo zoomTo - !colAdd !colDel colEdit abacus - condFmt - *dock actions'

const menus: [string, string, string][] = [
  ['Pro', 'j', 'ect'], ['', 'E', 'dit'], ['', 'V', 'iew'], ['', 'L', 'ayer'], ['', 'S', 'ettings'], ['', 'P', 'lugins'],
  ['Vect', 'o', 'r'], ['', 'R', 'aster'], ['', 'D', 'atabase'], ['', 'W', 'eb'], ['', 'M', 'esh'], ['Pro', 'c', 'essing'], ['', 'H', 'elp'],
]

const tree: { icon: string; text: string; state?: string; sub?: boolean }[] = [
  { icon: 'star', text: 'Favorites' },
  { icon: 'marks', text: 'Spatial Bookmarks', state: 'shut' },
  { icon: 'home', text: 'Home', state: 'shut' },
  { icon: 'folder', text: 'C:\\ (Windows-SSD)', state: 'shut' },
  { icon: 'folder', text: 'D:\\ (Data)', state: 'shut' },
  { icon: 'folder', text: 'E:\\ (Elements)', state: 'shut' },
  { icon: 'gpkg', text: 'GeoPackage' },
  { icon: 'feather', text: 'SpatiaLite' },
  { icon: 'elephant', text: 'PostGIS', state: 'wide' },
  { icon: 'plug', text: 'argo', state: 'shut', sub: true },
  { icon: 'plug', text: 'postGis251', state: 'shut', sub: true },
  { icon: 'hana', text: 'SAP HANA' },
  { icon: 'mssql', text: 'MSSQL' },
  { icon: 'oracle', text: 'Oracle' },
  { icon: 'wms', text: 'WMS/WMTS' },
  { icon: 'vtiles', text: 'Vector Tiles' },
  { icon: 'xyz', text: 'XYZ Tiles', state: 'shut' },
  { icon: 'wcs', text: 'WCS' },
  { icon: 'wfs', text: 'WFS / OGC API - Features' },
]

const fields: [string, string][] = [
  ['qgs_fid', '12008'],
  ['fid', '0'],
  ['OBJECTID', '0'],
  ['BSM', '10305'],
  ['YSDM', '6001010000'],
  ['ZDDM', '430681118242JB00462'],
  ['BDCDYH', '430681118242JB00462F04624002'],
  ['ZDTZM', 'B'],
  ['ZL', '姹丨綏甯傚眻瀛愮　闀囧眻鍘熸潙浜斿崄浜旂粍鏍忔竻鐧囷困缁緬'],
]

/* Building footprints, digitised on separate sheets with their own origin and resolution */
interface Sheet { x: number; y: number; rx: number; ry: number; shapes: string }
const sheets: Sheet[] = [
  {
    x: 300, y: 145, rx: 1568 / 600, ry: 3,
    shapes: `0,0 142,0 88,102 0,44
0,72 10,80 68,129 21,200 0,182
110,203 129,220 148,193 196,237 170,277 170,284 161,296 148,286 130,307 74,255
281,269 319,322 261,376 227,329 254,303 254,295
334,364 371,408 299,486 263,441
421,449 463,515 386,579 351,524 364,513 358,502
280,0 294,26 286,38 306,62 321,48 343,76 420,0
343,89 432,-2 496,83 407,173 386,147 371,159 350,131 363,119
476,124 530,199 491,235 508,259 473,290 403,192
568,214 597,254 613,241 631,265 516,371 470,306
583,327 611,363 629,347 647,373 568,447 523,384
644,405 690,471 622,530 578,463
708,472 751,536 662,613 649,594 640,600 626,578 633,571 620,550
770,560 793,593 781,604 800,633 823,614 847,648 763,722 720,660 726,653 704,619
888,643 979,765 898,844 863,798 848,812 828,786 836,776 834,769 828,768 820,778 815,772 831,757 808,722
285,727 301,754 278,772 337,872 291,908 217,780
488,712 509,740 518,732 532,752 523,762 545,795 456,875 399,794
541,809 560,833 569,825 577,833 595,817 601,826 583,843 588,853 579,861 596,888 502,973 447,896
643,856 649,864 634,880 660,917 654,926 677,960 611,1020 554,937
688,967 705,991 714,987 732,1013 727,1020 741,1042 704,1076 682,1046 657,1068 627,1025
404,920 436,967 460,947 482,982 390,1061 337,978
534,1120 552,1143 534,1162 556,1192 497,1247 457,1194
556,1192 578,1220 596,1204 614,1228 536,1303 497,1247
958,827 976,853 961,870 990,914 931,972 878,901
1010,901 1044,947 1071,924 1088,948 980,1046 931,972
1054,993 1119,1088 1126,1084 1140,1106 1073,1165 993,1047
1140,1138 1158,1160 1189,1130 1208,1154 1126,1234 1092,1188
1189,1190 1203,1209 1223,1189 1261,1241 1180,1318 1128,1248
936,1203 1002,1297 929,1363 914,1340 904,1348 871,1299 880,1290 863,1268`,
  },
  {
    x: 300, y: 580, rx: 1568 / 850, ry: 3,
    shapes: `469,4 485,38 490,33 512,82 461,143 438,93 445,84 431,50
707,16 742,89 688,157 653,86
777,125 817,208 776,262 735,181
601,262 613,288 605,300 616,323 563,389 540,341
880,-40 917,28 876,84 838,18
920,35 943,80 971,43 985,70 914,163 877,91
978,80 996,114 968,150 984,182 942,236 910,175
1012,166 1048,239 983,322 971,298 964,309 951,284 958,275 947,252
1036,265 1060,313 1044,333 1058,361 1026,403 989,326
1077,359 1112,430 1069,485 1034,415
1234,568 1253,651 1183,692 1177,664 1168,669 1162,648 1170,641 1164,610
1268,650 1297,733 1225,799 1215,772 1205,781 1195,752 1204,742 1196,715
701,492 725,542 679,600 656,550
743,566 780,637 790,625 803,650 783,677 770,652 733,700 697,629
948,556 983,632 922,707 894,650 878,668 871,653
1020,676 1051,750 987,822 956,748
1095,834 1131,910 1077,978 1055,932 1048,938 1041,923 1077,876 1073,861
1290,781 1325,853 1335,841 1354,878 1299,949 1280,911 1275,918 1241,846
1351,951 1383,1015 1339,1070 1326,1047 1318,1059 1310,1044 1318,1032 1308,1008
1391,1018 1415,1062 1429,1045 1441,1070 1383,1144 1348,1077
1443,1073 1468,1119 1476,1111 1488,1134 1434,1205 1397,1134
1480,1178 1511,1253 1497,1271 1506,1296 1480,1326 1464,1291 1462,1294 1434,1228
1214,1151 1263,1247 1214,1315 1164,1221
1288,1258 1329,1330 1300,1380 1205,1380`,
  },
  {
    x: 840, y: 145, rx: 1568 / 600, ry: 1568 / 660,
    shapes: `337,24 355,28 360,0 391,0 386,32 417,38 404,108 323,96
1121,8 1211,21 1199,70 1109,52
325,252 439,248 442,327 327,331
334,368 438,371 435,441 332,439 333,416 321,415 322,392 334,392
797,234 845,242 853,202 882,207 859,315 781,301
58,560 169,585 151,658 38,633
38,679 151,703 145,726 159,730 152,759 137,756 130,779 18,753
11,762 127,794 120,817 134,822 126,847 110,843 103,866 -13,835
104,889 185,910 164,979 52,951 60,928 90,935
293,912 305,914 303,931 363,938 349,1027 275,1018
481,960 561,969 547,1058 467,1047
786,1034 896,1044 890,1116 779,1107
928,700 1003,708 1000,731 1030,734 1025,784 919,774
1069,920 1121,931 1124,925 1150,930 1132,1005 1053,990
1104,1091 1181,1118 1145,1202 1121,1194 1118,1203 1086,1191 1089,1182 1067,1174
1199,1141 1295,1177 1282,1207 1257,1199 1240,1237 1168,1210
280,1108 391,1130 373,1210 326,1202 322,1219 303,1216 307,1198 261,1189 267,1160 247,1155 252,1133 273,1137
425,1125 454,1130 424,1250 371,1241 388,1167 415,1172
445,1181 498,1191 496,1197 521,1202 503,1277 424,1262
556,1153 603,1163 589,1217 575,1214 557,1290 505,1280 522,1205 559,1212 569,1175 555,1172
617,1158 674,1166 650,1294 592,1285
718,1237 797,1251 780,1328 727,1318 738,1263 713,1257
805,1251 875,1263 855,1359 785,1347
1088,1334 1141,1345 1121,1426 1068,1415
1284,1325 1314,1319 1340,1421 1287,1432 1266,1354 1291,1348
323,1353 339,1390 350,1386 356,1399 269,1432 246,1382 280,1370 278,1363 293,1357 296,1363`,
  },
  {
    x: 1500, y: 150, rx: 3, ry: 1568 / 880,
    shapes: `84,89 220,69 218,61 247,57 260,88 230,93 242,120 107,141
94,258 173,244 200,295 121,308
175,240 280,220 293,243 264,249 280,278 203,292
90,394 122,388 126,394 200,380 242,457 136,477
220,378 308,360 319,379 310,382 328,413 250,429
332,509 386,501 419,577 360,586 357,581 299,590 283,552 314,546 319,557 344,552 337,537 343,534
391,645 428,641 444,691 357,700 346,665 396,659
330,871 523,848 543,906 452,917 442,885 395,891 398,899 341,905
326,1008 451,986 480,1046 355,1067
460,998 577,978 602,1029 485,1050
419,1100 521,1090 535,1143 433,1153
682,1067 815,1056 833,1131 700,1142
570,1188 642,1172 675,1224 604,1240
856,1228 947,1238 928,1307 835,1298
532,1356 563,1350 560,1344 647,1327 679,1384 563,1408
1120,1287 1215,1311 1161,1387 1127,1380 1123,1386 1092,1379 1096,1373 1066,1364
1267,1328 1362,1353 1314,1420 1280,1412 1276,1419 1249,1411 1253,1405 1218,1396
583,1494 648,1481 689,1551 624,1563
655,1482 743,1465 773,1515 685,1533
836,1434 932,1445 913,1496 819,1484
817,1486 911,1497 890,1555 829,1548 831,1542 798,1536
989,1498 1151,1516 1143,1540 1113,1537 1105,1565 1020,1565 1024,1555 973,1548`,
  },
  { x: 0, y: 0, rx: 1, ry: 1, shapes: '1260,1008 1291,1012 1287,1040 1255,1035' },
]
const origin = { x: 304, y: 150 }
const buildings = sheets.flatMap((s) =>
  s.shapes.split('\n').map((line) =>
    line
      .split(' ')
      .map((pt) => {
        const [x, y] = pt.split(',').map(Number)
        return `${(s.x + x / s.rx - origin.x).toFixed(1)},${(s.y + y / s.ry - origin.y).toFixed(1)}`
      })
      .join(' '),
  ),
)

const rising = Array.from({ length: 11 }, (_, i) => `M${15 + i * 16} 0L${15 + i * 16 - 84} 84`).join('')
const falling = Array.from({ length: 11 }, (_, i) => `M${i * 16 - 79} 0l84 84`).join('')
const symbols: { name: string; kind: string; d?: string }[] = [
  { name: 'gradient   plasma', kind: 'plasma' },
  { name: 'gray 3 fill', kind: 'gray' },
  { name: 'hashed black /', kind: 'hash', d: rising },
  { name: 'hashed black \\', kind: 'hash', d: falling },
  { name: 'hashed black X', kind: 'hash', d: rising + falling },
  { name: 'outline blue', kind: 'line blue' },
  { name: '', kind: 'line green' },
  { name: '', kind: 'line red' },
]
const tabs = ['tagTab', 'maskTab', 'cube', 'diaTab', 'history']
const symButtons = ['plus', 'triUp', 'minus', 'triDown', 'dup', 'unlock']
</script>

<template>
  <div class="app">
    <header class="title">
      <Icon name="logo" class="logo" />
      <span>*Untitled Project — QGIS</span>
      <div class="win">
        <button aria-label="Minimize"><svg viewBox="0 0 16 16"><path d="M1 8h14" /></svg></button>
        <button aria-label="Restore"><svg viewBox="0 0 16 16"><path d="M1 4h11v11H1ZM4 4V3q0-2 2-2h7q2 0 2 2v7q0 2-2 2h-1" /></svg></button>
        <button aria-label="Close"><svg viewBox="0 0 16 16"><path d="m1 1 14 14M15 1 1 15" /></svg></button>
      </div>
    </header>
    <nav class="menu">
      <button v-for="m in menus" :key="m[1] + m[2]">{{ m[0] }}<u>{{ m[1] }}</u>{{ m[2] }}</button>
    </nav>
    <ToolBar :items="mainTools" />
    <ToolBar :items="editTools" class="last" />

    <main class="work">
      <aside class="left">
        <section class="browser">
          <div class="dock-title">
            <h2>Browser</h2>
            <button aria-label="Float"><Icon name="float" /></button><button aria-label="Close"><Icon name="close" /></button>
          </div>
          <ToolBar small items="addLayer refresh funnel collapse info" />
          <div class="tree-box">
            <ul class="tree">
              <li v-for="t in tree" :key="t.text" :class="{ sub: t.sub }">
                <i :class="['twist', t.state]"></i>
                <Icon :name="t.icon" class="tico" />
                <span>{{ t.text }}</span>
              </li>
            </ul>
            <ScrollBar dir="v" :before="0" :size="381" :after="64" />
            <ScrollBar dir="h" :before="0" :size="224" :after="5" />
            <div></div>
          </div>
        </section>
        <div class="split-h"></div>
        <section class="layers">
          <div class="dock-title">
            <h2>Layers</h2>
            <button aria-label="Float"><Icon name="float" /></button><button aria-label="Close"><Icon name="close" /></button>
          </div>
          <ToolBar small items="*brush groupAdd eye funnelMenu epsFilter v expand collapse remLayer" />
          <div class="layer-box">
            <label class="layer current"><input type="checkbox" class="check" checked /><i class="swatch violet"></i><b>ZDJBXX [1198]</b></label>
            <label class="layer"><input type="checkbox" class="check" /><i class="point"></i><em>ZDJBXX_Point</em></label>
          </div>
        </section>
      </aside>

      <div class="center">
        <div class="map">
          <svg width="100%" height="100%" aria-label="Map canvas">
            <polygon v-for="(p, i) in buildings" :key="i" :points="p" fill="#e8718d" stroke="#232323" stroke-width="1.5" stroke-linejoin="round" />
          </svg>
        </div>
        <section class="attrs">
          <div class="dock-title">
            <h2>ZDJBXX — Features Total: 1198, Filtered: 1198, Selected: 0</h2>
            <button aria-label="Float"><Icon name="float" /></button><button aria-label="Close"><Icon name="close" /></button>
          </div>
          <ToolBar small :items="attrTools" />
          <div class="attr-body">
            <div class="flist">
              <button class="expr"><Icon name="exprFind" class="i24" />Expression<i class="down"></i></button>
              <div class="rows-box">
                <div class="rows">
                  <label v-for="n in 13" :key="n" :class="{ current: n === 1 }"><input type="checkbox" />6001010000</label>
                </div>
                <ScrollBar dir="v" :before="0" :size="40" :after="214" />
              </div>
              <div class="pager">
                <button class="pg off" aria-label="First"><svg viewBox="0 0 18 20"><path d="M9 1v18L1 10ZM17 1v18l-8-9Z" /></svg></button>
                <button class="pg off" aria-label="Previous"><svg viewBox="0 0 18 20"><path d="M15 1v18L3 10Z" /></svg></button>
                <button class="pg" aria-label="Next"><svg viewBox="0 0 18 20"><path d="M3 1v18l13-9Z" /></svg></button>
                <button class="pg" aria-label="Last"><svg viewBox="0 0 18 20"><path d="M1 1v18l8-9ZM9 1v18l8-9Z" /></svg></button>
                <span class="count">1 / 1198</span>
                <button class="bulb" aria-label="Highlight"><Icon name="bulb" class="i24" /></button>
                <button class="pan" aria-label="Pan"><Icon name="fourWay" class="i24" /></button>
                <button aria-label="Zoom"><Icon name="lens" class="i24" /></button>
              </div>
            </div>
            <div class="form">
              <div class="fields">
                <template v-for="f in fields" :key="f[0]">
                  <label :for="f[0]">{{ f[0] }}</label>
                  <input :id="f[0]" :value="f[1]" :class="{ han: f[0] === 'ZL' }" readonly />
                </template>
              </div>
              <ScrollBar dir="v" :before="0" :size="43" :after="275" />
            </div>
          </div>
          <div class="attr-foot">
            <button class="push all"><Icon name="table" class="i20" />Show All Features<i class="down"></i></button>
            <button class="pressed" aria-label="Form view"><Icon name="formView" class="i20" /></button>
            <button class="flat" aria-label="Table view"><Icon name="table" class="i20" /></button>
          </div>
        </section>
      </div>

      <aside class="right">
        <div class="dock-title">
          <h2>Layer Styling</h2>
          <button aria-label="Float"><Icon name="float" /></button><button aria-label="Close"><Icon name="close" /></button>
        </div>
        <div class="combo top"><Icon name="polygon" class="i24" /><select aria-label="Layer"><option>ZDJBXX</option></select><i class="down"></i></div>
        <div class="style-body">
          <div class="tabs">
            <button class="tab sel" aria-label="Symbology"><Icon name="brushTab" /></button>
            <button v-for="t in tabs" :key="t" class="tab" :aria-label="t"><Icon :name="t" /></button>
          </div>
          <div class="panel">
            <div class="combo renderer"><Icon name="single" class="i20" /><select aria-label="Renderer"><option>Single Symbol</option></select><i class="down"></i></div>
            <div class="symbol">
              <div class="preview"><i></i></div>
              <div class="sym-tree">
                <div class="sym current"><i class="twist wide"></i><i class="swatch violet"></i><b>Fill</b></div>
                <div class="sym child"><i class="swatch pink"></i>Simple Fill</div>
              </div>
              <div class="sym-btns">
                <button v-for="(b, i) in symButtons" :key="b" class="push" :class="{ dim: i > 0 }" :aria-label="b"><Icon :name="b" class="i20" /></button>
              </div>
            </div>
            <hr class="full" />
            <div class="props">
              <label for="color">Color</label>
              <div class="color"><button id="color" class="push"><i></i></button><button class="push menu-btn" aria-label="Color menu"><i class="down"></i></button></div>
              <label for="opacity">Opacity</label>
              <div class="opacity">
                <input id="opacity" type="range" min="0" max="100" value="100" />
                <div class="spin"><input aria-label="Opacity value" value="100.0 %" /><span class="steps"><i class="up off"></i><i class="down"></i></span></div>
                <button class="flat" aria-label="Override"><Icon name="override" class="i30" /></button>
              </div>
              <label for="unit">Unit</label>
              <div class="combo unit"><select id="unit"><option>Millimeters</option></select><i class="down"></i></div>
            </div>
            <hr />
            <div class="find">
              <div class="field"><Icon name="search" class="i20" /><input aria-label="Filter" value="Favorites" /><Icon name="clear" class="i20" /><button aria-label="Groups"><i class="down"></i></button></div>
              <button class="flat" aria-label="Style manager"><Icon name="styleMgr" class="i20" /></button>
            </div>
            <div class="gallery-box">
              <div class="gallery">
                <figure v-for="s in symbols" :key="s.kind + s.name">
                  <svg v-if="s.d" class="thumb hash" viewBox="0 0 91 77"><path :d="s.d" /></svg>
                  <div v-else :class="['thumb', s.kind]"></div>
                  <figcaption v-if="s.name">{{ s.name }}</figcaption>
                </figure>
              </div>
              <ScrollBar dir="v" :before="0" :size="359" :after="339" />
            </div>
            <div class="row acts">
              <button class="pressed" aria-label="Icon view"><Icon name="gridView" class="i20" /></button>
              <button class="flat" aria-label="List view"><Icon name="table" class="i20" /></button>
              <span class="grow"></span>
              <button class="push save">Save Symbol⋯</button>
              <button class="push adv">Advanced<i class="down"></i></button>
            </div>
            <button class="rendering"><i class="twist shut"></i>Layer Rendering</button>
            <div class="row apply">
              <button class="push sq" aria-label="Undo"><Icon name="undo" class="i20" /></button>
              <button class="push sq" aria-label="Redo"><Icon name="redo" class="i20" /></button>
              <span class="grow"></span>
              <label><input type="checkbox" class="check" checked />Live update</label>
              <button class="push ok">应用</button>
            </div>
          </div>
        </div>
      </aside>
    </main>

    <footer class="status">
      <div class="locate"><Icon name="search" class="i18" /><input placeholder="Type to locate (Ctrl+K)" aria-label="Locate" /></div>
      <span class="grow">Pan distance 109.918 m (48.291312° W)</span>
      <label for="coord">Coordinate</label>
      <input id="coord" class="coord" value="401254.9,3197359.6" />
      <button class="flat ext" aria-label="Extents"><Icon name="extents" class="i24" /></button>
      <label for="scale">Scale</label>
      <div class="combo scale"><select id="scale"><option>1:2052</option></select><i class="down"></i></div>
      <button class="flat lock" aria-label="Lock scale"><Icon name="lock" class="i20" /></button>
      <label for="mag">Magnifier</label>
      <div class="spin mag"><input id="mag" value="100%" /><span class="steps"><i class="up"></i><i class="down"></i></span></div>
      <label for="rot">Rotation</label>
      <div class="spin rot"><input id="rot" value="0.0 °" /><span class="steps"><i class="up"></i><i class="down"></i></span></div>
      <label class="render"><input type="checkbox" class="check" checked />Render</label>
      <button class="flat crs"><Icon name="crs" class="i24" />EPSG:4547</button>
      <button class="flat" aria-label="Messages"><Icon name="bubble" class="i24" /></button>
      <span class="mark">CSDN @vandh</span>
    </footer>
    <div class="taskbar"></div>
  </div>
</template>

<style>
body { margin: 0; background: #f0f0f0; }
.app *, .app *::before { box-sizing: border-box; }
.app button { border: 0; background: none; padding: 0; margin: 0; color: inherit; font: inherit; white-space: nowrap; display: flex; align-items: center; justify-content: center; }
.app i { display: block; flex: none; }

.tools { display: flex; align-items: center; flex: none; }
.tools.large { height: 43px; gap: 2px; background: linear-gradient(#fafafa, #efefef); border-top: 1px solid #d0d0d0; }
.tools.large.last { height: 44px; border-top: 1px solid #b4b4b4; border-bottom: 1px solid #b4b4b4; }
.tools .tool { width: 31px; height: 31px; border: 1px solid transparent; border-radius: 3px; }
.tools .tool svg { width: 23px; height: 23px; }
.tools.small { height: 32px; gap: 1px; padding-left: 6px; }
.tools.small .tool { width: 24px; height: 24px; }
.tools.small .tool svg { width: 16px; height: 16px; }
.tools .tool.on { background: #dcdcdc; border-color: #b4b4b4; }
.tools .dim svg { opacity: .4; filter: grayscale(.75); }
.tools .handle { width: 8px; height: 18px; margin: 0 3px 0 11px; background: radial-gradient(circle, #b0b0b0 1px, transparent 1px) 0 0 / 4px 3px; }
.tools .handle:first-child { margin-left: 6px; }
.tools .sep { width: 8px; height: 20px; background: linear-gradient(90deg, transparent 3px, #d2d2d2 3px, #d2d2d2 5px, transparent 5px); }
.tools.small .sep { width: 9px; height: 16px; }
.tools .drop { width: 16px; height: 24px; }
.tools .drop::before { content: ''; border: 6px solid transparent; border-top: 7px solid #555; border-bottom: 0; }

.bar { display: flex; background: #e4e4e4; }
.bar.v { flex-direction: column; width: 22px; border-left: 1px solid #b4b4b4; }
.bar.h { height: 21px; border-top: 1px solid #b4b4b4; border-right: 1px solid #b4b4b4; }
.app .bar .end { flex: none; width: 21px; height: 21px; background: linear-gradient(90deg, #fff, #f2f2f2); }
.bar .groove, .bar .grip { flex-basis: 0; }
.bar.v .grip { border: solid #b4b4b4; border-width: 1px 0; background: linear-gradient(90deg, #fff, #f2f2f2); }
.bar.h .grip { border: solid #b4b4b4; border-width: 0 1px; background: linear-gradient(#fff, #f2f2f2); }
.app .bar.v .fwd { border-top: 1px solid #b4b4b4; }
.app .bar.h .fwd { border-left: 1px solid #b4b4b4; }
.bar .end::before { content: ''; border: 6px solid transparent; }
.bar.v .back::before { border-bottom: 6px solid #555; border-top: 0; }
.bar.v .fwd::before { border-top: 6px solid #555; border-bottom: 0; }
.bar.h .back::before { border-right: 7px solid #555; border-left: 0; }
.bar.h .fwd::before { border-left: 7px solid #555; border-right: 0; }
</style>

<style scoped>
.app { position: relative; display: flex; flex-direction: column; height: 100vh; overflow: hidden; background: #f0f0f0; color: #000; font: 18px/24px "Noto Sans", "Noto Sans CJK SC", sans-serif; }
.i18 { width: 18px; height: 18px; flex: none; }
.i20 { width: 20px; height: 20px; flex: none; }
.i24 { width: 24px; height: 24px; flex: none; }
.i30 { width: 30px; height: 24px; flex: none; }
.grow { flex: 1; }

.title { display: flex; align-items: center; height: 34px; flex: none; padding: 0 2px; gap: 7px; background: #e9f5f7; font-size: 17px; }
.logo { width: 24px; height: 24px; }
.win { margin-left: auto; display: flex; }
.app .win button { width: 70px; height: 34px; }
.win svg { width: 15px; height: 15px; fill: none; stroke: #111; stroke-width: 1.3; }
.menu { display: flex; align-items: center; height: 28px; flex: none; gap: 18px; padding-left: 14px; }
.app .menu button { display: block; }
.menu u { text-underline-offset: 3px; text-decoration-thickness: 1px; }

.work { display: flex; flex: 1; min-height: 0; }
.dock-title { display: flex; align-items: center; height: 22px; flex: none; padding-left: 4px; gap: 2px; }
.dock-title h2 { margin: 0 auto 0 0; font-size: 18px; line-height: 22px; font-weight: 400; white-space: nowrap; }
.dock-title svg { width: 13px; height: 13px; }

.left { display: flex; flex-direction: column; width: 303px; flex: none; padding-right: 9px; }
.browser { display: flex; flex-direction: column; flex: none; height: 564px; }
.tree-box { display: grid; grid-template: minmax(0, 1fr) auto / minmax(0, 1fr) auto; flex: 1; min-height: 0; margin-top: 2px; border: 1px solid #b4b4b4; }
.tree { margin: 0; padding: 0; list-style: none; overflow: hidden; background: #fff; }
.tree li { display: flex; align-items: center; height: 26px; white-space: nowrap; }
.tree .sub { padding-left: 19px; }
.tree .twist { width: 12px; margin: 0 7px 0 3px; }
.tree span { padding-left: 6px; }
.tico { width: 24px; height: 22px; flex: none; }
.sub .tico { width: 17px; margin-left: 4px; }
.twist.shut::before { content: ''; display: block; width: 0; margin-left: 3px; border: 5px solid transparent; border-left: 6px solid #555; border-right: 0; }
.twist.wide::before { content: ''; display: block; width: 0; border: 6px solid transparent; border-top: 6px solid #555; border-bottom: 0; }
.split-h { height: 9px; flex: none; background: radial-gradient(circle, #b4b4b4 1px, transparent 1px) center / 4px 5px no-repeat; }
.layers { display: flex; flex-direction: column; flex: 1; }
.layer-box { flex: 1; margin-top: 2px; border: 1px solid #b4b4b4; background: #fff; }
.layer { display: flex; align-items: center; height: 27px; padding-left: 33px; gap: 7px; }
.current { background: #efefef; }
.layer b, .layer em { font-size: 19px; white-space: nowrap; }
.layer b { text-decoration: underline; text-underline-offset: 3px; }
.layer em { font-weight: 600; color: #808080; }
.check { appearance: none; width: 20px; height: 20px; margin: 0; flex: none; border: 1px solid #b4b4b4; background: #fff; }
.check:checked { background: #fff url('data:image/svg+xml,%3Csvg xmlns="http://www.w3.org/2000/svg" viewBox="0 0 20 20"%3E%3Cpath d="M4 9l4 7 7-13" fill="none" stroke="%23000" stroke-width="2.6"/%3E%3C/svg%3E'); }
.swatch { width: 20px; height: 20px; border: 1px solid #3a4a78; }
.violet { background: #a271a2; }
.pink { background: #e8718d; border-color: #232323; }
.point { width: 12px; height: 12px; margin: 0 4px; border: 1px solid #232323; border-radius: 50%; background: #8a5a9a; }

.center { display: flex; flex-direction: column; flex: 1; min-width: 0; }
.map { flex: 1; min-height: 0; overflow: hidden; border: 1px solid #b4b4b4; background: #fff; }
.map svg { display: block; }
.attrs { flex: none; padding: 9px 0 2px; font-family: "Liberation Mono", "Noto Sans CJK SC", monospace; font-size: 15px; }
.attrs .dock-title { padding-left: 8px; font-family: "Noto Sans", sans-serif; }
.attr-body { display: flex; gap: 6px; height: 362px; margin-top: 2px; }
.flist { display: flex; flex-direction: column; width: 347px; flex: none; }
.app .expr { height: 33px; padding: 0 2px 0 5px; justify-content: flex-start; }
.down { border: 6px solid transparent; border-top: 7px solid #555; border-bottom: 0; width: 0; }
.up { border: 6px solid transparent; border-bottom: 7px solid #555; border-top: 0; width: 0; }
.up.off { border-bottom-color: #a8a8a8; }
.expr .down { margin: 16px 0 0 auto; }
.rows-box { display: flex; flex: 1; min-height: 0; border: 1px solid #b4b4b4; background: #fff; }
.rows { flex: 1; overflow: hidden; }
.rows label { display: flex; align-items: center; height: 24px; padding-left: 4px; gap: 10px; font: 19px/24px "Noto Sans", sans-serif; }
.rows input { appearance: none; width: 13px; height: 13px; margin: 0 0 3px; border: 1px solid #8a8a8a; background: #f4f4f4; }
.pager { display: flex; align-items: center; height: 33px; flex: none; }
.app .pg { width: 25px; height: 30px; }
.pg svg { width: 18px; height: 20px; fill: #5b8cc4; stroke: #34506e; }
.pg.off svg { fill: #d0d4d8; stroke: #b4b8bc; }
.count { font-size: 18px; margin-right: auto; }
.app .bulb, .app .pressed { width: 32px; height: 31px; border: 1px solid #b4b4b4; border-radius: 3px; background: #dcdcdc; }
.app .pan { margin: 0 8px 0 26px; }
.pager > :last-child { margin-right: 4px; }
.form { display: flex; flex: 1; min-width: 0; border: 2px solid #b4b4b4; }
.fields { display: grid; grid-template-columns: 99px 1fr; grid-auto-rows: 24px; row-gap: 15px; align-content: start; flex: 1; padding: 30px 26px 0; overflow: hidden; }
.fields label { line-height: 26px; }
.fields input { border: 0; padding: 0 2px; min-width: 0; background: #fbfbfb; font: inherit; height: 24px; outline: 0; }
.fields .han { font-size: 18px; }
.attr-foot { display: flex; align-items: center; gap: 2px; height: 34px; padding: 4px 2px 0 3px; }
.app .push { border: 1px solid #a8a8a8; border-radius: 3px; background: linear-gradient(#fff, #ededed); }
.app .all { width: 206px; height: 30px; margin-right: auto; padding: 0 0 0 4px; gap: 4px; justify-content: flex-start; }
.all .down { margin: 12px 0 0 8px; }
.app .flat { width: 31px; height: 31px; }

.right { display: flex; flex-direction: column; width: 544px; flex: none; padding: 0 3px 1px 12px; font-family: "Liberation Mono", "Noto Sans CJK SC", monospace; font-size: 15px; }
.right .dock-title { padding-left: 1px; font-family: "Noto Sans", sans-serif; }
.combo { display: flex; align-items: center; border: 1px solid #a8a8a8; border-radius: 3px; background: linear-gradient(#fff, #efefef); }
.combo select, .spin input, .field input, .locate input, .coord { appearance: none; flex: 1; min-width: 0; border: 0; padding: 0; background: none; font: inherit; color: inherit; outline: 0; }
.combo .down { margin-right: 10px; }
.top { height: 32px; flex: none; margin-top: 2px; padding-left: 5px; gap: 3px; }
.style-body { display: flex; flex: 1; min-height: 0; gap: 3px; margin-top: 9px; }
.tabs { width: 38px; flex: none; background: #5c5c5c; }
.app .tab { width: 38px; height: 32px; padding-right: 8px; }
.app .tab.sel { background: #f0f0f0; padding-right: 2px; }
.tab svg { width: 22px; height: 22px; }
.panel { display: flex; flex-direction: column; flex: 1; min-width: 0; }
.renderer { height: 32px; flex: none; padding-left: 8px; gap: 5px; }
.symbol { display: flex; flex: none; height: 190px; margin-top: 9px; }
.preview { display: flex; align-items: center; justify-content: center; width: 127px; padding-right: 1px; }
.preview i { width: 61px; height: 61px; border: 1px solid #232323; background: #e8718d; }
.sym-tree { flex: 1; margin-left: 9px; border: 1px solid #b4b4b4; background: #fff; font: 18px/24px "Noto Sans", sans-serif; }
.sym { display: flex; align-items: center; height: 27px; gap: 7px; }
.sym .swatch { width: 19px; height: 19px; }
.sym .twist { margin: 0 8px 0 9px; }
.sym b { font-weight: 600; }
.child { padding-left: 63px; }
.sym-btns { display: grid; grid-template-columns: 39px 39px; grid-auto-rows: 33px; gap: 12px 9px; padding: 8px 0 0 9px; }
.dim svg { opacity: .5; }
.app .push.dim { border-color: #c8c8c8; }
hr { width: 100%; flex: none; margin: 0; border: 0; border-top: 1px solid #a0a0a0; }
hr.full { margin-top: 8px; }
.panel > :not(.full):not(.renderer):not(.symbol):not(.apply) { margin-right: 13px; }
hr:not(.full) { width: auto; }
.props { display: grid; grid-template-columns: 72px 1fr; row-gap: 10px; align-items: center; flex: none; padding: 12px 0 3px; }
.color { display: flex; gap: 1px; }
.app .color button { flex: 1; height: 29px; padding: 2px 4px; }
.color button i { width: 100%; height: 23px; border-radius: 3px; background: #e8718d; }
.app .color .menu-btn { flex: none; width: 18px; padding: 0; }
.color .menu-btn i { width: 0; height: 0; border-radius: 0; background: none; }
.opacity { display: flex; align-items: center; gap: 4px; }
.opacity > input { appearance: none; flex: 1; min-width: 0; height: 20px; margin: 0; background: none; }
.opacity > input::-webkit-slider-runnable-track { height: 9px; border: 1px solid #0a64b4; border-radius: 2px; background: #0d86e8; }
.opacity > input::-webkit-slider-thumb { appearance: none; width: 20px; height: 20px; margin-top: -7px; border: 1px solid #a8a8a8; border-radius: 3px; background: #fafafa; }
.spin { display: flex; height: 30px; border: 1px solid #a8a8a8; border-radius: 3px; background: #fff; }
.opacity .spin { width: 100px; padding-left: 5px; }
.steps { display: flex; flex-direction: column; align-items: center; justify-content: center; gap: 5px; width: 21px; border-left: 1px solid #b4b4b4; background: linear-gradient(#fff, #efefef); }
.app .opacity .flat { width: 41px; padding-left: 8px; }
.unit { height: 26px; padding-left: 4px; }
.find { display: flex; align-items: center; gap: 4px; padding-top: 8px; }
.app .find .flat { height: 26px; width: 35px; }
.field { display: flex; align-items: center; flex: 1; height: 26px; padding-left: 12px; gap: 6px; border: 1px solid #a8a8a8; border-radius: 3px; background: #fff; }
.app .field button { width: 30px; height: 24px; margin-left: 6px; background: linear-gradient(#fff, #efefef); }
.gallery-box { display: flex; flex: 1; min-height: 0; margin-top: 7px; border: 1px solid #b4b4b4; background: #fff; }
.gallery { display: grid; grid-template-columns: 189px 189px; grid-auto-rows: 205px; flex: 1; overflow: hidden; font: 18px/24px "Noto Sans", sans-serif; }
figure { display: flex; flex-direction: column; align-items: center; gap: 20px; margin: 0; padding-top: 21px; white-space: pre; }
.thumb { width: 95px; height: 82px; flex: none; border: 2px solid #000; border-radius: 1px; }
.hash { fill: none; stroke: #000; stroke-width: 1.3; }
.plasma { background: radial-gradient(circle farthest-corner at 0 0, #0d0887, #7e03a8 27%, #cc4778 53%, #f58547 78%, #fdc328 92%, #f0f921); }
.gray { border-color: #fff; background: #969696; }
.line { width: 98px; height: 84px; margin: -1px; border-width: 5px; border-radius: 3px; }
.blue { border-color: #377eb8; }
.green { border-color: #4daf4a; }
.red { border-color: #e41a1c; }
.row { display: flex; align-items: center; flex: none; gap: 6px; }
.acts { margin-top: 7px; }
.acts .pressed + .flat { margin-left: -6px; }
.app .save { width: 128px; height: 30px; }
.app .adv { width: 101px; height: 30px; gap: 6px; }
.app .rendering { justify-content: flex-start; height: 24px; margin-top: 31px; padding-left: 4px; gap: 9px; font-size: 17px; font-weight: 700; flex: none; }
.rendering .twist::before { margin-left: 0; border-left-color: #222; }
.apply { margin-top: 9px; }
.app .sq { width: 32px; height: 31px; }
.apply label { display: flex; align-items: center; gap: 8px; }
.app .ok { width: 80px; height: 30px; margin-left: 6px; font-size: 17px; }

.status { position: relative; display: flex; align-items: center; height: 38px; flex: none; padding: 2px 5px 0 4px; font: 13px/24px "Liberation Mono", "Noto Sans CJK SC", monospace; }
.locate { display: flex; align-items: center; width: 364px; height: 30px; margin-right: 8px; padding-left: 12px; gap: 8px; border: 1px solid #a8a8a8; border-radius: 3px; background: #fff; font-size: 15px; }
.locate input::placeholder { color: #808080; opacity: 1; }
.status .coord { flex: none; width: 160px; height: 30px; margin-left: 5px; padding-left: 6px; border: 1px solid #a8a8a8; border-radius: 3px; background: #fff; }
.app .ext { width: 41px; }
.scale { width: 117px; height: 27px; margin-left: 4px; padding-left: 4px; background: linear-gradient(90deg, #fff 86px, #f4f4f4 86px); }
.app .lock { width: 40px; }
.status .spin { padding-left: 5px; }
.mag { width: 117px; margin: 0 9px 0 4px; }
.rot { width: 109px; margin: 0 6px 0 9px; }
.render { display: flex; align-items: center; gap: 9px; }
.app .crs { width: auto; gap: 2px; margin: 0 31px 0 15px; }
.mark { position: absolute; right: 14px; bottom: -6px; color: #9a9a9a; font: 11px/20px "Liberation Sans", sans-serif; }
.taskbar { height: 11px; flex: none; border-top: 2px solid #a9b8ba; background: #caf1f1; }
</style>
